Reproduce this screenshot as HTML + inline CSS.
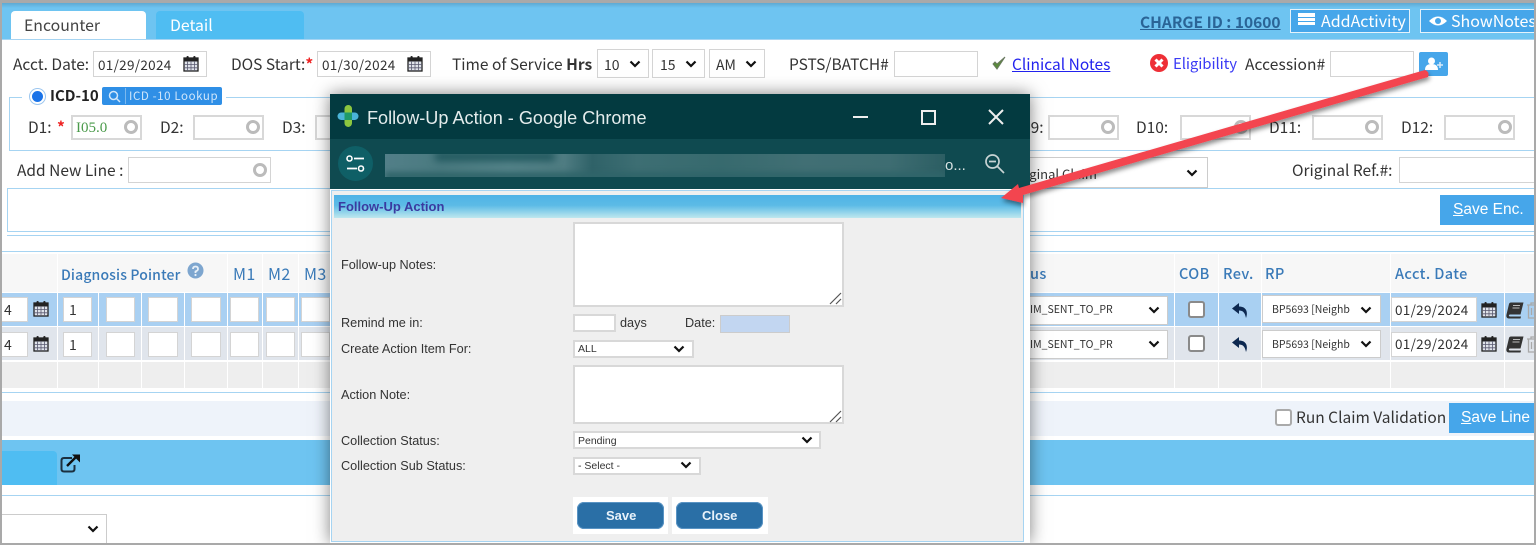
<!DOCTYPE html>
<html><head><meta charset="utf-8"><title>Follow-Up Action</title>
<style>
html,body{margin:0;padding:0;background:#fff}
#p{position:relative;width:1536px;height:545px;overflow:hidden;background:#fff;font-family:"Noto Sans CJK JP","Liberation Sans",sans-serif;font-size:15.5px;color:#333}
#p div,#p span.t,#p svg{position:absolute}
.t{position:absolute;white-space:nowrap;line-height:20px}
.i{background:#fff;border:1px solid #d4d4d4;box-sizing:border-box}
.i2{background:#fff;border:2px solid #d8d8d8;box-sizing:border-box}
.c{width:12px;height:8px}
.h{color:#3a7ab8;font-weight:500;font-size:14.500px;letter-spacing:.4px}
.dot{width:14px;height:14px;border:3px solid #bbb;border-radius:50%;box-sizing:border-box;background:#fff}
.cal{width:16px;height:17px}
.m{font-family:"Liberation Sans",sans-serif;font-size:12.700px;color:#333}
.b{background:#46a6ea;color:#fff;font-family:"Liberation Sans",sans-serif}
.s{background:#fff;border:1px solid #ccc;box-sizing:border-box}
.blue{background:#a6d4f2}
.d{font-size:13.500px;letter-spacing:.3px}
</style></head><body>
<div id="p">
<svg width="0" height="0" style="position:absolute"><defs>
<symbol id="chev" viewBox="0 0 12 8"><path d="M1.500 1.500L6 6L10.500 1.500" fill="none" stroke="#111" stroke-width="2.200"/></symbol>
<symbol id="cal" viewBox="0 0 16 17"><rect x="1" y="3" width="14" height="13" fill="#dfe3ea" stroke="#222" stroke-width="1.300"/><rect x="1" y="3" width="14" height="3.500" fill="#222"/><rect x="3.500" y="1" width="2.200" height="4" fill="#222" rx="1"/><rect x="10.300" y="1" width="2.200" height="4" fill="#222" rx="1"/><path d="M1 9.500H15M1 12.800H15M4.500 6V16M8 6V16M11.500 6V16" stroke="#5a5a70" stroke-width=".8"/></symbol>
<symbol id="rev" viewBox="0 0 16 15"><path d="M7 0L0 5.500L7 11V7.500C10.500 7.500 12.800 9 14 15C16.500 8 13.500 3.500 7 3.500Z" fill="#0d2850"/></symbol>
<symbol id="book" viewBox="0 0 18 17"><path d="M5 0.500H17.500L14.500 12.500H4C2.500 12.500 2.500 14.500 4 14.500H15L14.500 16.500H3C0.500 16.500 0 14.500 0.500 12.500L3 2C3.300 1 4 0.500 5 0.500Z" fill="#333"/><path d="M7 3.500H14M6.500 6H13.500" stroke="#bbb" stroke-width="1"/></symbol>
<symbol id="trash" viewBox="0 0 12 17"><path d="M0 3H12M4 3V1H8V3M1.500 3V16H10.500V3M4.500 6V13M7.500 6V13" fill="none" stroke="#a9a9a9" stroke-width="1.300"/></symbol>
</defs></svg>

<!-- top bar -->
<div style="left:0;top:3px;width:1536px;height:37px;background:linear-gradient(#5fa9d2 0,#6ec4f1 5px)"></div>
<div style="left:0;top:39px;width:1536px;height:1px;background:#a6d4f2"></div>
<div style="left:11px;top:11px;width:135px;height:28px;background:#fff;border-radius:4px 4px 0 0"></div>
<div style="left:156px;top:11px;width:148px;height:28px;background:#4fbdf2;border-radius:4px 4px 0 0"></div>
<span class="t" style="left:24px;top:15px;color:#444;font-size:15.800px">Encounter</span>
<span class="t" style="left:170px;top:15px;color:#fff;font-size:15.800px">Detail</span>
<span class="t" style="left:1140px;top:12px;font-weight:700;color:#2a6496;text-decoration:underline;font-size:15.500px">CHARGE ID : 10600</span>
<div class="b" style="left:1290px;top:9px;width:120px;height:24px;border:1px solid #e4f2fb;box-sizing:border-box"></div>
<svg style="left:1298px;top:13px" width="18" height="14"><rect width="17" height="4" y="0" fill="#fff"/><rect width="17" height="3" y="5" fill="#fff"/><rect width="17" height="3" y="9" fill="#fff"/></svg>
<span class="t" style="left:1321px;top:10px;color:#fff;font-size:16px">AddActivity</span>
<div class="b" style="left:1420px;top:9px;width:116px;height:24px;border:1px solid #e4f2fb;box-sizing:border-box"></div>
<svg style="left:1429px;top:15px" width="18" height="12"><path d="M0 6Q9 -3 18 6Q9 15 0 6Z" fill="#fff"/><circle cx="9" cy="6" r="3" fill="#46a6ea"/></svg>
<span class="t" style="left:1451px;top:10px;color:#fff;font-size:16px">ShowNotes</span>

<!-- row 1 -->
<span class="t" style="left:13px;top:54px">Acct. Date:</span>
<div class="i" style="left:93px;top:51px;width:114px;height:26px"></div>
<span class="t d" style="left:98px;top:54px">01/29/2024</span>
<svg class="cal" style="left:183px;top:55px"><use href="#cal"/></svg>
<span class="t" style="left:231px;top:54px">DOS Start:<b style="color:#e22">*</b></span>
<div class="i" style="left:317px;top:51px;width:114px;height:26px"></div>
<span class="t d" style="left:322px;top:54px">01/30/2024</span>
<svg class="cal" style="left:407px;top:55px"><use href="#cal"/></svg>
<span class="t" style="left:452px;top:54px">Time of Service <b>Hrs</b></span>
<div class="i" style="left:597px;top:49px;width:52px;height:29px"></div><span class="t" style="left:604px;top:55px;font-size:14px">10</span><svg class="c" style="left:629px;top:60px"><use href="#chev"/></svg>
<div class="i" style="left:652px;top:49px;width:53px;height:29px"></div><span class="t" style="left:660px;top:55px;font-size:14px">15</span><svg class="c" style="left:685px;top:60px"><use href="#chev"/></svg>
<div class="i" style="left:709px;top:49px;width:56px;height:29px"></div><span class="t" style="left:716px;top:55px;font-size:14px">AM</span><svg class="c" style="left:745px;top:60px"><use href="#chev"/></svg>
<span class="t" style="left:789px;top:54px">PSTS/BATCH#</span>
<div class="i" style="left:894px;top:51px;width:84px;height:26px"></div>
<svg style="left:992px;top:56px" width="14" height="14"><path d="M1 8L5 13L13 1L5 8L3 6Z" fill="#5a8a3a" stroke="#6a7a60"/></svg>
<span class="t" style="left:1012px;top:54px;color:#2222ee;text-decoration:underline">Clinical Notes</span>
<svg style="left:1150px;top:54px" width="18" height="18"><circle cx="9" cy="9" r="9" fill="#ee2f36"/><path d="M5.500 5.500L12.500 12.500M12.500 5.500L5.500 12.500" stroke="#fff" stroke-width="3"/></svg>
<span class="t" style="left:1173px;top:54px;color:#3b3bf5;font-size:15px;letter-spacing:-.1px">Eligibility</span>
<span class="t" style="left:1245px;top:54px;letter-spacing:.1px">Accession#</span>
<div class="i" style="left:1330px;top:51px;width:84px;height:26px"></div>
<div class="b" style="left:1419px;top:52px;width:29px;height:24px;border-radius:2px"></div>
<svg style="left:1425px;top:57px" width="18" height="14"><circle cx="6.500" cy="4" r="3.500" fill="#fff"/><path d="M0 13Q0 7 6.500 7Q13 7 13 13Z" fill="#fff"/><path d="M12 8H18M15 5V11" stroke="#d8ecfa" stroke-width="1.500"/></svg>

<!-- ICD fieldset -->
<div style="left:9px;top:97px;width:1527px;height:54px;border:1px solid #a6d4f2;border-right:0;box-sizing:border-box"></div>
<div style="left:22px;top:88px;width:204px;height:18px;background:#fff"></div>
<div style="left:30px;top:89px;width:15px;height:15px;border-radius:50%;background:#1a73e8;border:2px solid #fff;box-shadow:0 0 0 1px #9cc6ef;box-sizing:border-box"></div>
<span class="t" style="left:50px;top:86px;font-weight:700;color:#222;font-size:15px">ICD-10</span>
<div style="left:102px;top:87px;width:120px;height:18px;background:#2f8fe6;border-radius:2px"></div>
<div style="left:125px;top:88px;width:1px;height:16px;background:#7bb8ee"></div>
<svg style="left:108px;top:90px" width="13" height="13"><circle cx="5.500" cy="5.500" r="4" fill="none" stroke="#d0e6fa" stroke-width="1.500"/><path d="M8.500 8.500L12 12" stroke="#d0e6fa" stroke-width="1.500"/></svg>
<span class="t" style="left:129px;top:86px;font-size:11.500px;color:#cfe6fb;letter-spacing:.6px">ICD -10 Lookup</span>
<span class="t" style="left:28px;top:117px">D1:</span><b class="t" style="left:57px;top:117px;color:#e22">*</b>
<div class="i2" style="left:71px;top:115px;width:71px;height:25px"></div>
<span class="t" style="left:76px;top:118px;color:#4a9a4a;font-family:'Liberation Serif',serif;font-size:15px">I05.0</span><div class="dot" style="left:124px;top:120px"></div>
<span class="t" style="left:160px;top:117px">D2:</span>
<div class="i2" style="left:193px;top:115px;width:71px;height:25px"></div><div class="dot" style="left:246px;top:120px"></div>
<span class="t" style="left:282px;top:117px">D3:</span>
<div class="i2" style="left:315px;top:115px;width:40px;height:25px"></div>
<span class="t" style="left:1020px;top:117px">D9:</span>
<div class="i2" style="left:1048px;top:115px;width:71px;height:25px"></div><div class="dot" style="left:1101px;top:120px"></div>
<span class="t" style="left:1136px;top:117px">D10:</span>
<div class="i2" style="left:1180px;top:115px;width:71px;height:25px"></div><div class="dot" style="left:1234px;top:120px"></div>
<span class="t" style="left:1269px;top:117px">D11:</span>
<div class="i2" style="left:1312px;top:115px;width:71px;height:25px"></div><div class="dot" style="left:1365px;top:120px"></div>
<span class="t" style="left:1401px;top:117px">D12:</span>
<div class="i2" style="left:1444px;top:115px;width:71px;height:25px"></div><div class="dot" style="left:1498px;top:120px"></div>

<!-- add line -->
<span class="t" style="left:17px;top:160px">Add New Line :</span>
<div class="i" style="left:128px;top:157px;width:143px;height:26px"></div><div class="dot" style="left:253px;top:163px"></div>
<div class="s" style="left:1000px;top:157px;width:208px;height:31px"></div>
<span class="t" style="left:1011px;top:164px;font-size:13px">Original Claim</span>
<svg class="c" style="left:1186px;top:169px"><use href="#chev"/></svg>
<span class="t" style="left:1292px;top:160px">Original Ref.#:</span>
<div class="i" style="left:1399px;top:157px;width:137px;height:26px"></div>
<div style="left:7px;top:188px;width:1529px;height:44px;border:1px solid #a6d4f2;border-right:0;box-sizing:border-box"></div>
<div class="b" style="left:1440px;top:195px;width:94px;height:30px"></div>
<span class="t" style="left:1453px;top:200px;color:#fff;font-family:'Liberation Sans',sans-serif"><u>S</u>ave Enc.</span>
<div class="blue" style="left:7px;top:235px;width:1529px;height:1px"></div>

<!-- table -->
<div class="blue" style="left:0;top:251px;width:1536px;height:1px"></div>
<div style="left:0;top:254px;width:1536px;height:38px;background:#f7f7f7"></div>
<div style="left:0;top:293px;width:1536px;height:33px;background:#a9d0f2"></div>
<div style="left:0;top:327px;width:1536px;height:33px;background:#e0e5ec"></div>
<div style="left:0;top:362px;width:1536px;height:26px;background:#eee"></div>
<div style="left:57px;top:254px;width:1px;height:134px;background:#fff"></div>
<div style="left:98px;top:293px;width:1px;height:95px;background:#fff"></div>
<div style="left:141px;top:293px;width:1px;height:95px;background:#fff"></div>
<div style="left:184px;top:293px;width:1px;height:95px;background:#fff"></div>
<div style="left:227px;top:254px;width:1px;height:134px;background:#fff"></div>
<div style="left:262px;top:254px;width:1px;height:134px;background:#fff"></div>
<div style="left:298px;top:254px;width:1px;height:134px;background:#fff"></div>
<div style="left:1174px;top:254px;width:1px;height:134px;background:#fff"></div>
<div style="left:1218px;top:254px;width:1px;height:134px;background:#fff"></div>
<div style="left:1261px;top:254px;width:1px;height:134px;background:#fff"></div>
<div style="left:1390px;top:254px;width:1px;height:134px;background:#fff"></div>
<div style="left:1504px;top:254px;width:1px;height:134px;background:#fff"></div>

<span class="t h" style="left:61px;top:265px;font-size:14px;letter-spacing:.15px">Diagnosis Pointer</span>
<svg style="left:187px;top:262px" width="17" height="17"><circle cx="8.500" cy="8.500" r="8" fill="#7ea6cf"/><path d="M6 7Q6 4.500 8.500 4.500Q11 4.500 11 7Q11 8.500 8.500 9.500V11" fill="none" stroke="#e8f0f8" stroke-width="1.800"/><circle cx="8.500" cy="13" r="1.100" fill="#e8f0f8"/></svg>
<span class="t h" style="left:233px;top:263px;font-weight:400;font-size:16px">M1</span>
<span class="t h" style="left:268px;top:263px;font-weight:400;font-size:16px">M2</span>
<span class="t h" style="left:304px;top:263px;font-weight:400;font-size:16px">M3</span>
<span class="t h" style="left:1030px;top:264px">us</span>
<span class="t h" style="left:1179px;top:264px">COB</span>
<span class="t h" style="left:1223px;top:264px">Rev.</span>
<span class="t h" style="left:1265px;top:264px">RP</span>
<span class="t h" style="left:1395px;top:264px">Acct. Date</span>

<!-- row cells 1 -->
<div class="i" style="left:0;top:297px;width:28px;height:25px"></div><span class="t" style="left:4px;top:300px;font-size:14px">4</span>
<svg class="cal" style="left:33px;top:300px"><use href="#cal"/></svg>
<div class="i" style="left:63px;top:297px;width:29px;height:25px"></div><span class="t" style="left:69px;top:300px;font-size:14px">1</span>
<div class="i" style="left:106px;top:297px;width:29px;height:25px"></div>
<div class="i" style="left:148px;top:297px;width:30px;height:25px"></div>
<div class="i" style="left:191px;top:297px;width:30px;height:25px"></div>
<div class="i" style="left:230px;top:297px;width:29px;height:25px"></div>
<div class="i" style="left:266px;top:297px;width:29px;height:25px"></div>
<div class="i" style="left:301px;top:297px;width:29px;height:25px"></div>
<div class="s" style="left:1000px;top:296px;width:168px;height:29px"></div><span class="t" style="left:1030px;top:300px;font-size:10.500px">IM_SENT_TO_PR</span><svg class="c" style="left:1148px;top:306px"><use href="#chev"/></svg>
<div style="left:1188px;top:301px;width:17px;height:17px;background:#fff;border:2px solid #8a8a8a;border-radius:3px;box-sizing:border-box"></div>
<svg style="left:1232px;top:303px" width="16" height="15"><use href="#rev"/></svg>
<div class="s" style="left:1262px;top:295px;width:119px;height:28px"></div><span class="t" style="left:1272px;top:300px;font-size:10.500px">BP5693 [Neighb</span><svg class="c" style="left:1360px;top:306px"><use href="#chev"/></svg>
<div class="i" style="left:1391px;top:297px;width:86px;height:25px"></div><span class="t d" style="left:1395px;top:299px">01/29/2024</span>
<svg class="cal" style="left:1481px;top:301px"><use href="#cal"/></svg>
<svg style="left:1506px;top:302px" width="18" height="17"><use href="#book"/></svg>
<svg style="left:1527px;top:302px" width="12" height="17"><use href="#trash"/></svg>

<!-- row cells 2 -->
<div class="i" style="left:0;top:332px;width:28px;height:25px"></div><span class="t" style="left:4px;top:335px;font-size:14px">4</span>
<svg class="cal" style="left:33px;top:335px"><use href="#cal"/></svg>
<div class="i" style="left:63px;top:332px;width:29px;height:25px"></div><span class="t" style="left:69px;top:335px;font-size:14px">1</span>
<div class="i" style="left:106px;top:332px;width:29px;height:25px"></div>
<div class="i" style="left:148px;top:332px;width:30px;height:25px"></div>
<div class="i" style="left:191px;top:332px;width:30px;height:25px"></div>
<div class="i" style="left:230px;top:332px;width:29px;height:25px"></div>
<div class="i" style="left:266px;top:332px;width:29px;height:25px"></div>
<div class="i" style="left:301px;top:332px;width:29px;height:25px"></div>
<div class="s" style="left:1000px;top:330px;width:168px;height:29px"></div><span class="t" style="left:1030px;top:335px;font-size:10.500px">IM_SENT_TO_PR</span><svg class="c" style="left:1148px;top:340px"><use href="#chev"/></svg>
<div style="left:1188px;top:335px;width:17px;height:17px;background:#fff;border:2px solid #8a8a8a;border-radius:3px;box-sizing:border-box"></div>
<svg style="left:1232px;top:337px" width="16" height="15"><use href="#rev"/></svg>
<div class="s" style="left:1262px;top:330px;width:119px;height:28px"></div><span class="t" style="left:1272px;top:335px;font-size:10.500px">BP5693 [Neighb</span><svg class="c" style="left:1360px;top:340px"><use href="#chev"/></svg>
<div class="i" style="left:1391px;top:332px;width:86px;height:25px"></div><span class="t d" style="left:1395px;top:333px">01/29/2024</span>
<svg class="cal" style="left:1481px;top:335px"><use href="#cal"/></svg>
<svg style="left:1506px;top:336px" width="18" height="17"><use href="#book"/></svg>
<svg style="left:1527px;top:336px" width="12" height="17"><use href="#trash"/></svg>

<!-- lower -->
<div class="blue" style="left:0;top:392px;width:1536px;height:1px"></div>
<div style="left:0;top:401px;width:1536px;height:35px;background:#eef3fa"></div>
<div style="left:1275px;top:409px;width:17px;height:17px;background:#fff;border:2px solid #aaa;border-radius:3px;box-sizing:border-box"></div>
<span class="t" style="left:1296px;top:407px">Run Claim Validation</span>
<div class="b" style="left:1449px;top:403px;width:87px;height:30px"></div>
<span class="t" style="left:1461px;top:408px;color:#fff;font-family:'Liberation Sans',sans-serif"><u>S</u>ave Line</span>
<div style="left:0;top:440px;width:1536px;height:45px;background:#6ec4f1"></div>
<div style="left:0;top:451px;width:57px;height:34px;background:#4fbdf2;border-radius:0 4px 0 0"></div>
<svg style="left:60px;top:454px" width="21" height="19"><path d="M12 4H4Q1.500 4 1.500 6.500V15Q1.500 17.500 4 17.500H12Q14.500 17.500 14.500 15V11" fill="none" stroke="#1c3040" stroke-width="2"/><path d="M7 12L16 3" stroke="#111" stroke-width="2.400"/><path d="M12 0.500H20V8.500Z" fill="#111"/></svg>
<div class="blue" style="left:0;top:495px;width:1536px;height:1px"></div>
<div class="s" style="left:-2px;top:514px;width:109px;height:33px"></div>
<svg class="c" style="left:87px;top:525px"><use href="#chev"/></svg>

<!-- modal -->
<div style="left:330px;top:94px;width:700px;height:449px;background:#fff;box-shadow:0 0 16px rgba(0,0,0,.5)"></div>
<div style="left:330px;top:94px;width:700px;height:45px;background:#033a40"></div>
<div style="left:330px;top:139px;width:700px;height:50px;background:#0f4a50"></div>
<svg style="left:337px;top:105px" width="22" height="22"><rect x="0.500" y="7.500" width="21" height="7.500" rx="3.700" fill="#4ab4d8"/><rect x="7.500" y="0" width="7.500" height="22" rx="3.700" fill="#8cc63f"/><rect x="7.500" y="7.500" width="7.500" height="7.500" fill="#1f9a6a"/></svg>
<span class="t" style="left:367px;top:108px;color:#e4ecec;font-size:18.100px;font-family:'Liberation Sans',sans-serif">Follow-Up Action - Google Chrome</span>
<div style="left:853px;top:116px;width:15px;height:2px;background:#eee"></div>
<div style="left:921px;top:110px;width:15px;height:15px;border:2px solid #eee;box-sizing:border-box"></div>
<svg style="left:988px;top:109px" width="16" height="16"><path d="M1 1L15 15M15 1L1 15" stroke="#eee" stroke-width="2"/></svg>
<div style="left:338px;top:146px;width:35px;height:35px;border-radius:50%;background:#0f5f66"></div>
<svg style="left:346px;top:155px" width="19" height="18"><circle cx="3.500" cy="3.500" r="2.500" fill="none" stroke="#fff" stroke-width="1.600"/><path d="M8 3.500H18M1 13.500H11" stroke="#fff" stroke-width="1.800"/><circle cx="15" cy="13.500" r="2.500" fill="none" stroke="#fff" stroke-width="1.600"/></svg>
<div style="left:385px;top:154px;width:560px;height:23px;overflow:hidden;background:linear-gradient(90deg,#527f88 0,#4a7a80 10%,#55848a 22%,#4f7c82 32%,#2f6268 37%,#3d6e73 45%,#376a6e 60%,#416f74 75%,#3e6d72 90%,#2c5e63 100%)">
<div style="left:50px;top:-2px;width:120px;height:9px;background:#1f565c;filter:blur(4px)"></div>
<div style="left:0;top:18px;width:560px;height:8px;background:#2f6469;filter:blur(3px)"></div>
</div>
<span class="t" style="left:945px;top:156px;color:#d8e2e2;font-size:15px;font-family:'Liberation Sans',sans-serif">o...</span>
<svg style="left:984px;top:153px" width="22" height="22"><circle cx="8.500" cy="8.500" r="6.500" fill="none" stroke="#c8d4d4" stroke-width="1.700"/><path d="M5 8.500H12M13 13L20 20" stroke="#c8d4d4" stroke-width="1.700"/></svg>

<div style="left:331px;top:190px;width:693px;height:352px;background:#efefef;border:1px solid #a6d4f2;box-sizing:border-box"></div>
<div style="left:334px;top:195px;width:687px;height:23px;background:linear-gradient(#4fb2e6 0,#5cbbe6 45%,#bfe8ee 100%)"></div>
<span class="t" style="left:338px;top:197px;font:700 13px/20px 'Liberation Sans',sans-serif;color:#3a3aa0">Follow-Up Action</span>

<span class="t m" style="left:341px;top:255px">Follow-up Notes:</span>
<div class="i2" style="left:573px;top:222px;width:271px;height:85px"></div>
<svg style="left:828px;top:291px" width="14" height="14"><path d="M2 13L13 2M8 13L13 8" stroke="#555" stroke-width="1.200"/></svg>
<span class="t m" style="left:341px;top:313px">Remind me in:</span>
<div class="i2" style="left:573px;top:314px;width:43px;height:18px"></div>
<span class="t m" style="left:620px;top:313px">days</span>
<span class="t m" style="left:685px;top:313px">Date:</span>
<div style="left:720px;top:315px;width:70px;height:18px;background:#c2d6f1;border:1px solid #ccc;box-sizing:border-box"></div>
<span class="t m" style="left:341px;top:339px">Create Action Item For:</span>
<div class="i2" style="left:573px;top:340px;width:121px;height:18px"></div>
<span class="t m" style="left:578px;top:339px;font-size:10.500px">ALL</span><svg class="c" style="left:673px;top:345px"><use href="#chev"/></svg>
<span class="t m" style="left:341px;top:385px">Action Note:</span>
<div class="i2" style="left:573px;top:365px;width:271px;height:59px"></div>
<svg style="left:828px;top:409px" width="14" height="14"><path d="M2 13L13 2M8 13L13 8" stroke="#555" stroke-width="1.200"/></svg>
<span class="t m" style="left:341px;top:431px">Collection Status:</span>
<div class="i2" style="left:573px;top:431px;width:248px;height:18px"></div>
<span class="t m" style="left:578px;top:431px;font-size:10.500px">Pending</span><svg class="c" style="left:801px;top:436px"><use href="#chev"/></svg>
<span class="t m" style="left:341px;top:456px">Collection Sub Status:</span>
<div class="i2" style="left:573px;top:457px;width:128px;height:18px"></div>
<span class="t m" style="left:578px;top:456px;font-size:10.500px">- Select -</span><svg class="c" style="left:680px;top:461px"><use href="#chev"/></svg>

<div style="left:573px;top:497px;width:95px;height:37px;background:#fff"></div>
<div style="left:672px;top:497px;width:96px;height:37px;background:#fff"></div>
<div style="left:577px;top:502px;width:87px;height:27px;background:#2a6fa6;border-radius:7px;box-shadow:0 0 0 1px #5a94c4 inset"></div>
<div style="left:676px;top:502px;width:87px;height:27px;background:#2a6fa6;border-radius:7px;box-shadow:0 0 0 1px #5a94c4 inset"></div>
<span class="t" style="left:606px;top:506px;font:700 13px/20px 'Liberation Sans',sans-serif;color:#e8f2fa">Save</span>
<span class="t" style="left:702px;top:506px;font:700 13px/20px 'Liberation Sans',sans-serif;color:#e8f2fa">Close</span>

<!-- arrow -->
<svg style="left:0;top:0" width="1536" height="545">
<defs><filter id="sh" x="-5%" y="-20%" width="110%" height="140%"><feDropShadow dx="1" dy="3" stdDeviation="2.500" flood-color="#000" flood-opacity=".45"/></filter></defs>
<g filter="url(#sh)"><path d="M1425 70Q1430 72 1428 77L1023 195L1023 203L1001 198L1018 184L1019 188Z" fill="#f3444f"/></g>
</svg>

<!-- frame -->
<div style="left:0;top:0;width:1536px;height:3px;background:#a9a9a9"></div>
<div style="left:0;top:0;width:2px;height:545px;background:#a9a9a9"></div>
<div style="left:1534px;top:0;width:2px;height:545px;background:#a9a9a9"></div>
<div style="left:0;top:543px;width:1536px;height:2px;background:#a9a9a9"></div>
</div>
</body></html>
